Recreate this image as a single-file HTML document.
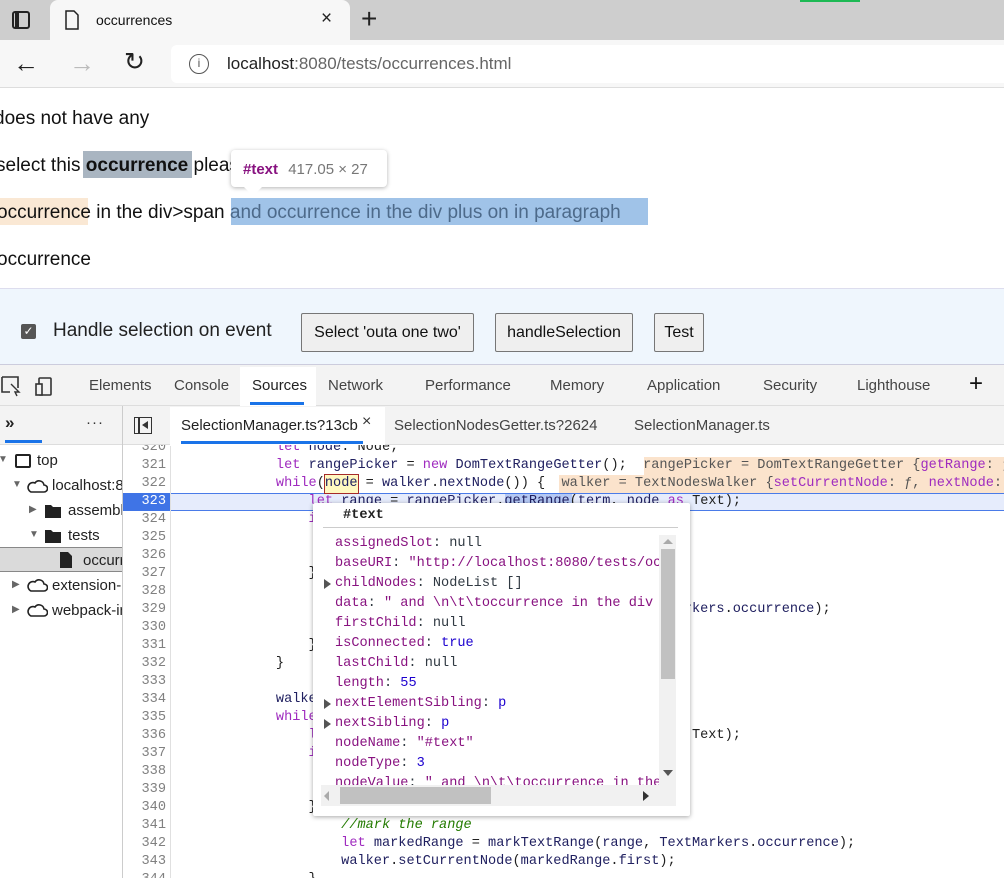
<!DOCTYPE html>
<html><head><meta charset="utf-8"><style>
*{margin:0;padding:0;box-sizing:border-box}
body{width:1004px;height:878px;overflow:hidden;position:relative;background:#fff;font-family:"Liberation Sans",sans-serif;color:#202020}
.a{position:absolute;white-space:nowrap}
.mono{font-family:"Liberation Mono",monospace;font-size:13.6px}
.code div{position:absolute;left:178px;height:18px;line-height:18px;white-space:pre}
.ln div{position:absolute;left:122px;width:44px;text-align:right;height:18px;line-height:18px;color:#808080}
.k{color:#9f2bbf}.v{color:#1a1aa6}.f{color:#202060}.c{color:#237b00;font-style:italic}
.pp div{position:absolute;left:335px;height:20px;line-height:20px;white-space:pre;color:#881280}
.pp .g{color:#303942}.pp .n{color:#1c00cf}.pp .s{color:#881280}
.tri{position:absolute;width:0;height:0;border-top:5px solid transparent;border-bottom:5px solid transparent;border-left:7px solid #555}
</style></head><body>
<div class="a" style="left:0;top:0;width:1004px;height:40px;background:#cecece"></div>
<div class="a" style="left:800px;top:0;width:60px;height:2px;background:#1db954"></div>
<div class="a" style="left:12px;top:11px;width:18px;height:18px;border:2px solid #222;border-radius:3px"></div>
<div class="a" style="left:15px;top:13px;width:4px;height:14px;background:#222"></div>
<div class="a" style="left:50px;top:0;width:300px;height:40px;background:#f7f7f7;border-radius:8px 8px 0 0"></div>
<svg class="a" style="left:64px;top:10px" width="16" height="20"><path d="M2 1h8l4 4v14H2z" fill="none" stroke="#222" stroke-width="1.5"/></svg>
<div class="a" style="left:96px;top:12px;font-size:14px;color:#111">occurrences</div>
<div class="a" style="left:321px;top:8px;font-size:19px;color:#222">×</div>
<div class="a" style="left:361px;top:3px;font-size:28px;font-weight:300;color:#222">+</div>
<div class="a" style="left:0;top:40px;width:1004px;height:48px;background:#f7f7f7;border-bottom:1px solid #ddd"></div>
<div class="a" style="left:13px;top:48px;font-size:26px;color:#222">←</div>
<div class="a" style="left:69px;top:48px;font-size:26px;color:#bbb">→</div>
<div class="a" style="left:124px;top:47px;font-size:25px;color:#222">↻</div>
<div class="a" style="left:171px;top:45px;width:840px;height:38px;background:#fff;border-radius:6px"></div>
<div class="a" style="left:189px;top:54px;width:20px;height:20px;border:1.5px solid #555;border-radius:50%;font-size:12px;text-align:center;line-height:17px;color:#555">i</div>
<div class="a" style="left:227px;top:54px;font-size:17px;color:#222">localhost<span style="color:#666">:8080/tests/occurrences.html</span></div>
<div class="a" style="left:-6px;top:108px;font-size:19px;color:#111">does not have any</div>
<div class="a" style="left:83px;top:151px;width:109px;height:27px;background:#a9b5c1"></div>
<div class="a" style="left:-4px;top:155px;font-size:19px;color:#111">select this <b>occurrence</b> pleas</div>
<div class="a" style="left:0;top:198px;width:88px;height:27px;background:#fae8d4"></div>
<div class="a" style="left:231px;top:198px;width:417px;height:27px;background:#a0c3e8"></div>
<div class="a" style="left:-3px;top:202px;font-size:19px;color:#111">occurrence in the div&gt;span <span style="color:#4d6a8a">and occurrence in the div plus on in paragraph</span></div>
<div class="a" style="left:-3px;top:249px;font-size:19px;color:#111">occurrence</div>
<div class="a" style="left:231px;top:150px;width:156px;height:37px;background:#fff;border-radius:4px;box-shadow:0 1px 4px rgba(0,0,0,.3)"></div>
<div class="a" style="left:244px;top:187px;width:0;height:0;border-left:9px solid transparent;border-right:9px solid transparent;border-top:9px solid #fff"></div>
<div class="a" style="left:243px;top:161px;font-size:15px;color:#881280;font-weight:bold">#text <span style="color:#777;font-weight:normal;margin-left:6px">417.05 × 27</span></div>
<div class="a" style="left:0;top:288px;width:1004px;height:77px;background:#eff6fd;border-top:1px solid #dde;border-bottom:1px solid #ccd"></div>
<div class="a" style="left:21px;top:324px;width:15px;height:15px;background:#555;border-radius:2px;color:#fff;font-size:12px;text-align:center;line-height:15px">✓</div>
<div class="a" style="left:53px;top:320px;font-size:19px;color:#222">Handle selection on event</div>
<div class="a" style="left:301px;top:313px;width:173px;height:39px;background:#efefef;border:1px solid #767676;border-radius:2px;font-size:16px;text-align:center;line-height:37px;color:#111">Select 'outa one two'</div>
<div class="a" style="left:495px;top:313px;width:138px;height:39px;background:#efefef;border:1px solid #767676;border-radius:2px;font-size:16px;text-align:center;line-height:37px;color:#111">handleSelection</div>
<div class="a" style="left:654px;top:313px;width:50px;height:39px;background:#efefef;border:1px solid #767676;border-radius:2px;font-size:16px;text-align:center;line-height:37px;color:#111">Test</div>
<div class="a" style="left:0;top:365px;width:1004px;height:41px;background:#f3f3f3;border-bottom:1px solid #ddd"></div>
<svg class="a" style="left:0;top:375px" width="60" height="22"><path d="M2 2h16v11M2 2v15h8" fill="none" stroke="#333" stroke-width="1.6"/><path d="M11 9l8 8-4 0 2 4" fill="none" stroke="#333" stroke-width="1.4"/><rect x="39" y="3" width="12" height="17" rx="1" fill="none" stroke="#333" stroke-width="1.6"/><rect x="36" y="9" width="6" height="11" fill="#f3f3f3" stroke="#333" stroke-width="1.6"/></svg>
<div class="a" style="left:240px;top:367px;width:76px;height:39px;background:#fff"></div>
<div class="a" style="left:250px;top:402px;width:54px;height:3px;background:#1a73e8"></div>
<div class="a" style="top:377px;font-size:15px;color:#444;left:89px">Elements</div>
<div class="a" style="top:377px;font-size:15px;color:#444;left:174px">Console</div>
<div class="a" style="top:377px;font-size:15px;color:#222;left:252px">Sources</div>
<div class="a" style="top:377px;font-size:15px;color:#444;left:328px">Network</div>
<div class="a" style="top:377px;font-size:15px;color:#444;left:425px">Performance</div>
<div class="a" style="top:377px;font-size:15px;color:#444;left:550px">Memory</div>
<div class="a" style="top:377px;font-size:15px;color:#444;left:647px">Application</div>
<div class="a" style="top:377px;font-size:15px;color:#444;left:763px">Security</div>
<div class="a" style="top:377px;font-size:15px;color:#444;left:857px">Lighthouse</div>
<div class="a" style="top:370px;font-size:24px;color:#111;left:969px">+</div>
<div class="a" style="left:0;top:406px;width:1004px;height:39px;background:#f3f3f3;border-bottom:1px solid #ddd"></div>
<div class="a" style="left:122px;top:406px;width:1px;height:472px;background:#ccc"></div>
<div class="a" style="left:5px;top:413px;font-size:17px;color:#222;font-weight:bold">»</div>
<div class="a" style="left:5px;top:440px;width:37px;height:3px;background:#1a73e8"></div>
<div class="a" style="left:86px;top:414px;font-size:15px;color:#333;letter-spacing:1px">···</div>
<div class="a" style="left:134px;top:417px;width:18px;height:17px;border:1.5px solid #333"></div>
<div class="a" style="left:138px;top:417px;width:1.5px;height:17px;background:#333"></div>
<div class="a" style="left:142px;top:421px;width:0;height:0;border-top:4.5px solid transparent;border-bottom:4.5px solid transparent;border-right:6px solid #333"></div>
<div class="a" style="left:170px;top:407px;width:215px;height:38px;background:#fff"></div>
<div class="a" style="left:181px;top:417px;font-size:15px;color:#222">SelectionManager.ts?13cb</div>
<div class="a" style="left:362px;top:413px;font-size:16px;color:#333">×</div>
<div class="a" style="left:181px;top:441px;width:182px;height:3px;background:#1a73e8"></div>
<div class="a" style="left:394px;top:417px;font-size:15px;color:#444">SelectionNodesGetter.ts?2624</div>
<div class="a" style="left:634px;top:417px;font-size:15px;color:#444">SelectionManager.ts</div>
<div class="a" style="left:0;top:446px;width:122px;height:432px;overflow:hidden;font-size:15px;color:#222">
 <div class="a" style="left:-2px;top:8px;font-size:10px;color:#666">▼</div>
 <div class="a" style="left:15px;top:8px;width:16px;height:14px;border:2px solid #222;border-radius:2px"></div>
 <div class="a" style="left:37px;top:6px">top</div>
 <div class="a" style="left:12px;top:33px;font-size:10px;color:#666">▼</div>
 <svg class="a" style="left:26px;top:33px" width="22" height="15"><path d="M5 13h13a3.5 3.5 0 0 0 0-7 5 5 0 0 0-9-2 4 4 0 0 0-4 9z" fill="none" stroke="#222" stroke-width="1.6"/></svg>
 <div class="a" style="left:52px;top:31px">localhost:8080</div>
 <div class="a" style="left:29px;top:58px;font-size:10px;color:#666">▶</div>
 <svg class="a" style="left:44px;top:57px" width="18" height="16"><path d="M1 2h6l2 2h8v11H1z" fill="#222"/></svg>
 <div class="a" style="left:68px;top:56px">assemblies</div>
 <div class="a" style="left:29px;top:83px;font-size:10px;color:#666">▼</div>
 <svg class="a" style="left:44px;top:82px" width="18" height="16"><path d="M1 2h6l2 2h8v11H1z" fill="#222"/></svg>
 <div class="a" style="left:68px;top:81px">tests</div>
 <div class="a" style="left:0;top:101px;width:122px;height:25px;background:#dadada;border-top:1px solid #888;border-bottom:1px solid #888"></div>
 <svg class="a" style="left:59px;top:105px" width="14" height="18"><path d="M1 1h8l4 4v12H1z" fill="#222"/></svg>
 <div class="a" style="left:83px;top:106px">occurrences.html</div>
 <div class="a" style="left:12px;top:133px;font-size:10px;color:#666">▶</div>
 <svg class="a" style="left:26px;top:132px" width="22" height="15"><path d="M5 13h13a3.5 3.5 0 0 0 0-7 5 5 0 0 0-9-2 4 4 0 0 0-4 9z" fill="none" stroke="#222" stroke-width="1.6"/></svg>
 <div class="a" style="left:52px;top:131px">extension-</div>
 <div class="a" style="left:12px;top:158px;font-size:10px;color:#666">▶</div>
 <svg class="a" style="left:26px;top:157px" width="22" height="15"><path d="M5 13h13a3.5 3.5 0 0 0 0-7 5 5 0 0 0-9-2 4 4 0 0 0-4 9z" fill="none" stroke="#222" stroke-width="1.6"/></svg>
 <div class="a" style="left:52px;top:156px">webpack-int</div>
</div>
<div class="a" style="left:123px;top:445px;width:881px;height:433px;overflow:hidden">
<div style="position:absolute;left:-123px;top:-445px;width:1004px;height:878px">
<div class="a" style="left:122px;top:493px;width:882px;height:18px;background:#e6ecfc;border-top:1px solid #4a7be8;border-bottom:1px solid #4a7be8"></div>
<div class="a" style="left:122px;top:493px;width:48px;height:18px;background:#3f74e6"></div>
<div class="a" style="left:170px;top:446px;width:1px;height:432px;background:#e0e0e0"></div>
<div class="a" style="left:644px;top:457px;width:360px;height:18px;background:#fbe3cc"></div>
<div class="a" style="left:559px;top:475px;width:445px;height:18px;background:#fbe3cc"></div>
<div class="a" style="left:324px;top:474px;width:35px;height:20px;background:#fff8c0;border:1px solid #a52a2a"></div>
<div class="a" style="left:505px;top:494px;width:67px;height:16px;background:#b4c8f4"></div>
<div class="ln mono">
<div style="top:439px">320</div><div style="top:457px">321</div><div style="top:475px">322</div><div style="top:493px;color:#fff">323</div><div style="top:511px">324</div><div style="top:529px">325</div><div style="top:547px">326</div><div style="top:565px">327</div><div style="top:583px">328</div><div style="top:601px">329</div><div style="top:619px">330</div><div style="top:637px">331</div><div style="top:655px">332</div><div style="top:673px">333</div><div style="top:691px">334</div><div style="top:709px">335</div><div style="top:727px">336</div><div style="top:745px">337</div><div style="top:763px">338</div><div style="top:781px">339</div><div style="top:799px">340</div><div style="top:817px">341</div><div style="top:835px">342</div><div style="top:853px">343</div><div style="top:871px">344</div>
</div>
<div class="code mono">
<div style="top:439px">            <span class="k">let</span> <span class="f">node</span>: Node;</div>
<div style="top:457px">            <span class="k">let</span> <span class="f">rangePicker</span> = <span class="k">new</span> <span class="f">DomTextRangeGetter</span>();  <span style="color:#555">rangePicker = DomTextRangeGetter {<span class="k">getRange</span>: ƒ}</span></div>
<div style="top:475px">            <span class="k">while</span>(<span class="f">node</span> = <span class="f">walker</span>.<span class="f">nextNode</span>()) {  <span style="color:#555">walker = TextNodesWalker {<span class="k">setCurrentNode</span>: ƒ, <span class="k">nextNode</span>: ƒ}</span></div>
<div style="top:493px">                <span class="k">let</span> <span class="f">range</span> = <span class="f">rangePicker</span>.<span class="f">getRange</span>(<span class="f">term</span>, <span class="f">node</span> <span class="k">as</span> Text);</div>
<div style="top:511px">                <span class="k">if</span></div>
<div style="top:565px">                }</div>
<div style="top:601px">                                                           <span class="f">tMarkers</span>.<span class="f">occurrence</span>);</div>
<div style="top:637px">                }</div>
<div style="top:655px">            }</div>
<div style="top:691px">            <span class="f">walker</span></div>
<div style="top:709px">            <span class="k">while</span></div>
<div style="top:727px">                <span class="k">l</span>                                              Text);</div>
<div style="top:745px">                <span class="k">i</span></div>
<div style="top:799px">                }</div>
<div style="top:817px">                    <span class="c">//mark the range</span></div>
<div style="top:835px">                    <span class="k">let</span> <span class="f">markedRange</span> = <span class="f">markTextRange</span>(<span class="f">range</span>, <span class="f">TextMarkers</span>.<span class="f">occurrence</span>);</div>
<div style="top:853px">                    <span class="f">walker</span>.<span class="f">setCurrentNode</span>(<span class="f">markedRange</span>.<span class="f">first</span>);</div>
<div style="top:871px">                }</div>
</div>
<div class="a" style="left:313px;top:503px;width:377px;height:313px;background:#fff;box-shadow:0 1px 5px rgba(0,0,0,.35);border-radius:2px;overflow:hidden">
 <div class="a" style="left:30px;top:5px;font-family:'Liberation Mono',monospace;font-size:13.6px;font-weight:bold;color:#222">#text</div>
 <div class="a" style="left:10px;top:24px;width:355px;height:1px;background:#ccc"></div>
</div>
<div class="a" style="left:313px;top:532px;width:347px;height:254px;overflow:hidden">
<div class="pp mono" style="position:absolute;left:-313px;top:-532px">
<div style="top:534px">assignedSlot<span class="g">: null</span></div>
<div style="top:554px">baseURI<span class="g">: </span><span class="s">"http://localhost:8080/tests/occurrences.html"</span></div>
<div style="top:574px">childNodes<span class="g">: NodeList []</span></div>
<div style="top:594px">data<span class="g">: </span><span class="s">" and \n\t\toccurrence in the div plus"</span></div>
<div style="top:614px">firstChild<span class="g">: null</span></div>
<div style="top:634px">isConnected<span class="g">: </span><span class="n">true</span></div>
<div style="top:654px">lastChild<span class="g">: null</span></div>
<div style="top:674px">length<span class="g">: </span><span class="n">55</span></div>
<div style="top:694px">nextElementSibling<span class="g">: </span><span class="n">p</span></div>
<div style="top:714px">nextSibling<span class="g">: </span><span class="n">p</span></div>
<div style="top:734px">nodeName<span class="g">: </span><span class="s">"#text"</span></div>
<div style="top:754px">nodeType<span class="g">: </span><span class="n">3</span></div>
<div style="top:774px">nodeValue<span class="g">: </span><span class="s">" and \n\t\toccurrence in the div"</span></div>
</div></div>
<div class="tri" style="left:324px;top:579px"></div>
<div class="tri" style="left:324px;top:699px"></div>
<div class="tri" style="left:324px;top:719px"></div>
<div class="a" style="left:659px;top:535px;width:17px;height:250px;background:#f1f1f1"></div>
<div class="a" style="left:661px;top:549px;width:14px;height:130px;background:#c1c1c1"></div>
<div class="a" style="left:663px;top:539px;width:0;height:0;border-left:5px solid transparent;border-right:5px solid transparent;border-bottom:5px solid #aaa"></div>
<div class="a" style="left:663px;top:770px;width:0;height:0;border-left:5px solid transparent;border-right:5px solid transparent;border-top:6px solid #555"></div>
<div class="a" style="left:321px;top:785px;width:355px;height:21px;background:#f1f1f1"></div>
<div class="a" style="left:340px;top:787px;width:151px;height:17px;background:#c1c1c1"></div>
<div class="a" style="left:324px;top:791px;width:0;height:0;border-top:5px solid transparent;border-bottom:5px solid transparent;border-right:5px solid #aaa"></div>
<div class="a" style="left:643px;top:791px;width:0;height:0;border-top:5px solid transparent;border-bottom:5px solid transparent;border-left:6px solid #333"></div>
</div></div>
</body></html>
